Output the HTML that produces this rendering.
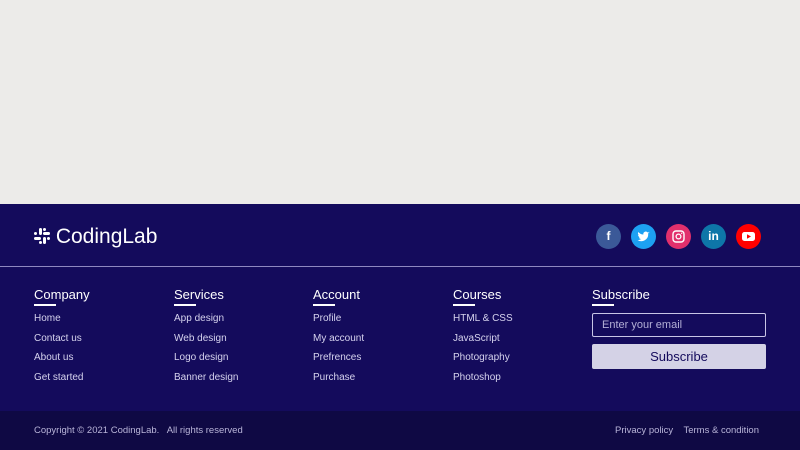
<!DOCTYPE html>
<html><head><style>
*{margin:0;padding:0;box-sizing:border-box}
body{width:800px;height:450px;background:#ecebe9;font-family:"Liberation Sans",sans-serif;position:relative;overflow:hidden}
.f{position:absolute;left:0;top:204px;width:800px;height:207px;background:#140b5c}
.b{position:absolute;left:0;top:411px;width:800px;height:39px;background:#0f0944;color:#b9b5d9;font-size:9.5px}
.logo{position:absolute;left:34px;top:225px;color:#fff;font-size:21px}
.hr{position:absolute;left:0;top:266px;width:800px;height:1px;background:#8e88c0}
.soc{position:absolute;top:224px;width:25px;height:25px;border-radius:50%;color:#fff;font-size:12px;font-weight:bold;text-align:center;line-height:25px}
.soc svg{position:absolute;left:6px;top:6px}
.col{position:absolute;top:287px;color:#fff}
.col h4{font-weight:normal;font-size:13px;position:relative;margin-bottom:11px}
.col h4:after{content:"";position:absolute;left:0;top:17px;width:22px;height:2px;background:#fff}
.col div{font-size:10px;color:#d6d3ee;height:19.5px}
</style></head><body>
<div class="f"></div>
<div class="logo"><svg width="16" height="16" viewBox="0 0 16 16" style="vertical-align:-1px"><g fill="#fff"><rect x="5" y="0" width="3" height="7" rx="1.5"/><rect x="9" y="9" width="3" height="7" rx="1.5"/><rect x="0" y="9" width="7" height="3" rx="1.5"/><rect x="9" y="4" width="7" height="3" rx="1.5"/><rect x="9" y="0" width="3" height="3" rx="1.5"/><rect x="0" y="4" width="3" height="3" rx="1.5"/><rect x="13" y="9" width="3" height="3" rx="1.5"/><rect x="5" y="13" width="3" height="3" rx="1.5"/></g></svg> CodingLab</div>
<div class="soc" style="left:596px;background:#3b5998">f</div>
<div class="soc" style="left:631px;background:#1da1f2"><svg width="13" height="13" viewBox="0 0 24 24"><path fill="#fff" d="M23 5c-.8.4-1.7.6-2.6.7.9-.6 1.6-1.4 2-2.5-.9.5-1.9.9-2.9 1.1A4.5 4.5 0 0 0 11.8 8.4 12.8 12.8 0 0 1 2.5 3.7a4.5 4.5 0 0 0 1.4 6c-.7 0-1.4-.2-2-.6 0 2.2 1.6 4 3.6 4.4-.7.2-1.4.2-2 .1.6 1.8 2.2 3.1 4.2 3.1A9 9 0 0 1 1 18.6 12.8 12.8 0 0 0 20.7 7.1V6.5c.9-.6 1.7-1.4 2.3-2.3z"/></svg></div>
<div class="soc" style="left:666px;background:#e1306c"><svg width="13" height="13" viewBox="0 0 13 13"><rect x="1" y="1" width="11" height="11" rx="3" fill="none" stroke="#fff" stroke-width="1.4"/><circle cx="6.5" cy="6.5" r="2.4" fill="none" stroke="#fff" stroke-width="1.3"/><circle cx="9.7" cy="3.3" r=".7" fill="#fff"/></svg></div>
<div class="soc" style="left:701px;background:#0e76a8">in</div>
<div class="soc" style="left:736px;background:#f00"><svg width="13" height="13" viewBox="0 0 13 13"><rect x="0" y="2" width="13" height="9" rx="2.5" fill="#fff"/><path d="M5 4.3v4.4l4-2.2z" fill="#f00"/></svg></div>
<div class="hr"></div>
<div class="col" style="left:34px"><h4>Company</h4><div>Home</div><div>Contact us</div><div>About us</div><div>Get started</div></div>
<div class="col" style="left:174px"><h4>Services</h4><div>App design</div><div>Web design</div><div>Logo design</div><div>Banner design</div></div>
<div class="col" style="left:313px"><h4>Account</h4><div>Profile</div><div>My account</div><div>Prefrences</div><div>Purchase</div></div>
<div class="col" style="left:453px"><h4>Courses</h4><div>HTML &amp; CSS</div><div>JavaScript</div><div>Photography</div><div>Photoshop</div></div>
<div class="col" style="left:592px"><h4>Subscribe</h4></div>
<div style="position:absolute;left:592px;top:313px;width:174px;height:24px;border:1.5px solid #c8c5e6;border-radius:2px;color:#b3afd6;font-size:11px;padding:5px 9px">Enter your email</div>
<div style="position:absolute;left:592px;top:344px;width:174px;height:25px;background:#d4d2e6;border-radius:2px;color:#140b5c;font-size:13px;text-align:center;line-height:25px">Subscribe</div>
<div class="b"><span style="position:absolute;left:34px;top:14px">Copyright © 2021 CodingLab.&nbsp;&nbsp; All rights reserved</span><span style="position:absolute;right:41px;top:14px">Privacy policy&nbsp;&nbsp;&nbsp; Terms &amp; condition</span></div>
</body></html>
